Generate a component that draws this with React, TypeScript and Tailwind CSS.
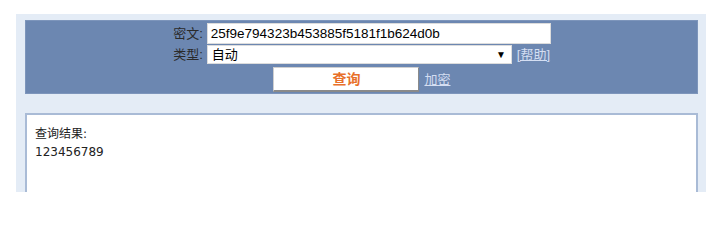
const font = { fontFamily: '"Liberation Sans", "Noto Sans CJK SC", sans-serif' };
const resultFont = { fontFamily: '"DejaVu Sans", "Noto Sans CJK SC", sans-serif' };

const App = () => {
	return (
		<div className="w-[720px] h-[230px] bg-white pt-[14px] pl-[16px]" style={font}>
			<div className="w-[690px] h-[178px] bg-[#e4ecf6] pt-[6px] pl-[9px] pr-[8px] overflow-hidden">
				{/* query form */}
				<div className="h-[74px] bg-[#6c87b1] border border-[#7d95bb] flex justify-center pt-[2px] pl-[1px]">
					<div className="grid grid-cols-[auto_auto] gap-x-[4px] gap-y-[1px] content-start">
						<div className="text-[13px] text-[#2a2a2a] text-right leading-[21px]">密文:</div>
						<div className="w-[344px] h-[21px] bg-white border border-[#dcdcdc] pl-[3px] text-[13.5px] leading-[19px] text-black">
							25f9e794323b453885f5181f1b624d0b
						</div>

						<div className="text-[13px] text-[#2a2a2a] text-right leading-[19px]">类型:</div>
						<div className="flex items-center">
							<div className="w-[305px] h-[19px] bg-white border border-[#dcdcdc] flex items-center justify-between pl-[4px] pr-[5px]">
								<span className="text-[13px] text-black leading-none">自动</span>
								<span className="text-[10px] text-black leading-none">▼</span>
							</div>
							<a className="ml-[5px] text-[13px] text-[#d4def2] underline leading-[19px]">[帮助]</a>
						</div>

						<div className="col-span-2 flex justify-center items-center mt-[2px]">
							<button className="w-[146px] h-[25px] bg-white border border-[#cfcfcf] border-r-[#8a8a8a] border-b-[#8a8a8a] border-b-2 text-[14px] font-bold text-[#e8702a]">
								查询
							</button>
							<a className="ml-[5px] text-[13px] text-[#d4def2] underline">加密</a>
						</div>
					</div>
				</div>

				{/* result */}
				<div className="mt-[19px] h-[200px] bg-white border-2 border-[#a9bbd6] pl-[8px] pt-[10px]">
					<p className="text-[12px] leading-[18px] text-[#222]" style={resultFont}>
						查询结果:
					</p>
					<p className="text-[12px] leading-[18px] text-[#222]" style={resultFont}>
						123456789
					</p>
				</div>
			</div>
		</div>
	);
};

export default App;
